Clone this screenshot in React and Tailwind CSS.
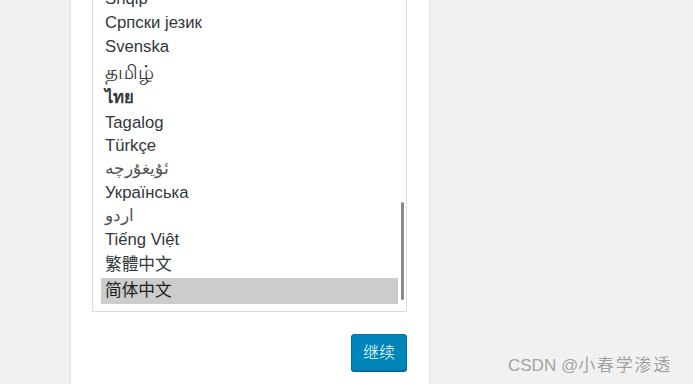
export default function App() {
  const items = [
    { t: "Shqip", h: "h-[24px]" },
    { t: "Српски језик", h: "h-[24px]" },
    { t: "Svenska", h: "h-[24px]" },
    { t: "தமிழ்", h: "h-[26px]", c: "text-[19.5px] pt-[2px]" },
    { t: "ไทย", h: "h-[25px]", c: "font-semibold" },
    { t: "Tagalog", h: "h-[24px]", c: "pt-[1px]" },
    { t: "Türkçe", h: "h-[23px]" },
    { t: "ئۇيغۇرچە", h: "h-[24px]", c: "font-normal text-[#555]" },
    { t: "Українська", h: "h-[24px]" },
    { t: "اردو", h: "h-[22px]", c: "text-[#555]" },
    { t: "Tiếng Việt", h: "h-[24px]", c: "pt-[2px]" },
    { t: "繁體中文", h: "h-[27px]" },
    { t: "简体中文", h: "h-[26px]", sel: true },
  ];
  return (
    <div
      className="relative w-[693px] h-[384px] overflow-hidden bg-[#f1f1f1] pl-[71px]"
      style={{ fontFamily: '"Liberation Sans", Arial, "Noto Sans CJK SC", sans-serif' }}
    >
      <div className="w-[358px] h-[400px] bg-white pl-[21px] pr-[22px] shadow-[0_1px_3px_rgba(0,0,0,0.13)] flex flex-col">
        <div className="mt-[-21px] w-[315px] border border-[#dddddd] shadow-[inset_0_1px_2px_rgba(0,0,0,0.07)] flex flex-row pl-[8px] pt-[7px] pb-[7px]">
          <div className="w-[297px] flex flex-col text-[16.7px] text-[#32373c]">
            {items.map((it, i) => (
              <div
                key={i}
                className={`${it.h} ${it.c || ""} flex items-center pl-[4px] whitespace-nowrap ${it.sel ? "bg-[#cccccc] text-[#1d1d1d]" : ""}`}
              >
                {it.t}
              </div>
            ))}
          </div>
          <div className="w-[8px] flex flex-col items-center">
            <div className="mt-[215px] ml-[1px] w-[3px] h-[98px] bg-[#8a8a8a] rounded-[2px]" />
          </div>
        </div>
        <div className="flex justify-end mt-[22px]">
          <button className="w-[56px] h-[37px] bg-[#0085ba] border border-[#0073aa] rounded-[3px] text-white text-[16px] font-light shadow-[0_1px_0_#006799]">
            继续
          </button>
        </div>
      </div>
      <div className="absolute left-[508px] top-[353px] text-[17px] text-[#a0a0a0] whitespace-nowrap [text-shadow:0_0_1px_#ffffff]">
        CSDN @<span className="tracking-[1.8px]">小春学渗透</span>
      </div>
    </div>
  );
}
